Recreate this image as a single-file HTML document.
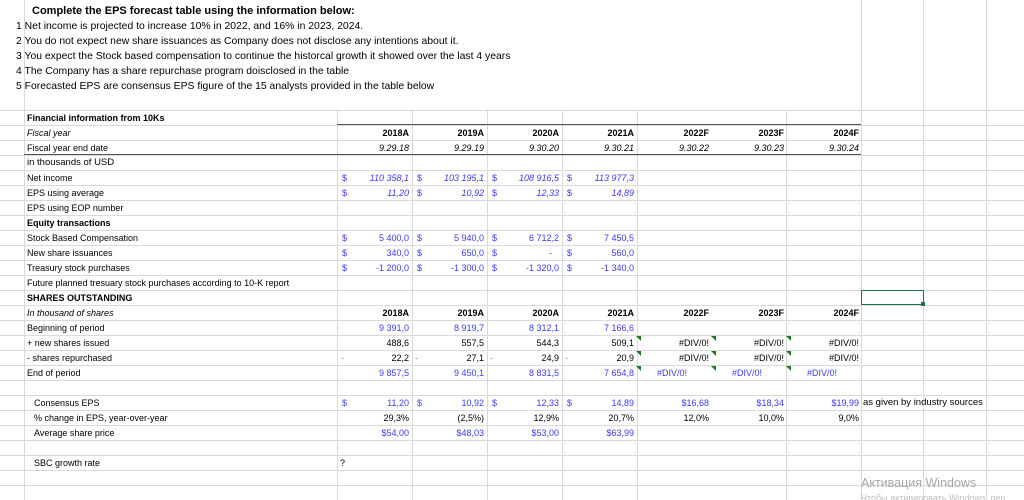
<!DOCTYPE html>
<html style="overflow:hidden;height:500px"><head><meta charset="utf-8"><style>
body{margin:0;width:1024px;height:500px;overflow:hidden;background:#fff;position:relative;font-family:"Liberation Sans",Arial,sans-serif;color:#000}
.g{position:absolute;left:0;top:110px;width:1024px;height:390px;background:repeating-linear-gradient(to bottom,#dadada 0,#dadada 1px,transparent 1px,transparent 15px)}
.v{position:absolute;width:1px;background:#dadada;top:0;height:500px}
.vt{top:110px;height:390px}
.c{position:absolute;height:15px;line-height:16px;white-space:nowrap;font-size:9px}
.r{text-align:right;width:72px}
.b{color:#3b3bf5}
.i{font-style:italic}
.bo{font-weight:bold}
.t{position:absolute;white-space:nowrap;font-size:10.4px;left:16px}
.tri{position:absolute;width:0;height:0;border-top:5px solid #1e7a1e;border-left:5px solid transparent}
</style></head><body>
<div class="g"></div>
<div class="v" style="left:24px"></div>
<div class="v vt" style="left:337px"></div>
<div class="v vt" style="left:412px"></div>
<div class="v vt" style="left:487px"></div>
<div class="v vt" style="left:562px"></div>
<div class="v vt" style="left:637px"></div>
<div class="v vt" style="left:786px"></div>
<div class="v" style="left:861px"></div>
<div class="v" style="left:923px"></div>
<div class="v" style="left:986px"></div>
<div class="v" style="left:315px;height:110px"></div>
<div class="v" style="left:385px;height:110px"></div>
<div style="position:absolute;left:25px;top:0;width:495px;height:110px;background:#fff"></div>
<div class="t bo" style="left:32px;top:5px;font-size:11px">Complete the EPS forecast table using the information below:</div>
<div class="t" style="top:21px">1 Net income is projected to increase 10% in 2022, and 16% in 2023, 2024.</div>
<div class="t" style="top:36px">2 You do not expect new share issuances as Company does not disclose any intentions about it.</div>
<div class="t" style="top:51px">3 You expect the Stock based compensation to continue the historcal growth it showed over the last 4 years</div>
<div class="t" style="top:66px">4 The Company has a share repurchase program doisclosed in the table</div>
<div class="t" style="top:81px">5 Forecasted EPS are consensus EPS figure of the 15 analysts provided in the table below</div>

<div style="position:absolute;left:337px;top:124px;width:524px;height:1px;background:#555"></div>
<div style="position:absolute;left:24px;top:154px;width:837px;height:1px;background:#555"></div>
<div style="position:absolute;left:861px;top:290px;width:61px;height:13px;border:1px solid #217346"></div>
<div style="position:absolute;left:921px;top:302px;width:4px;height:4px;background:#217346"></div>

<div class="c bo" style="left:27px;top:110px">Financial information from 10Ks</div>
<div class="c i" style="left:27px;top:125px">Fiscal year</div>
<div class="c" style="left:27px;top:140px">Fiscal year end date</div>
<div class="c" style="left:27px;top:155px;font-size:9.5px">in thousands of USD</div>
<div class="c" style="left:27px;top:170px">Net income</div>
<div class="c" style="left:27px;top:185px">EPS  using average</div>
<div class="c" style="left:27px;top:200px">EPS  using EOP number</div>
<div class="c bo" style="left:27px;top:215px">Equity transactions</div>
<div class="c" style="left:27px;top:230px">Stock Based Compensation</div>
<div class="c" style="left:27px;top:245px">New share issuances</div>
<div class="c" style="left:27px;top:260px">Treasury stock purchases</div>
<div class="c" style="left:27px;top:275px">Future planned tresuary stock purchases according to 10-K report</div>
<div class="c bo" style="left:27px;top:290px">SHARES OUTSTANDING</div>
<div class="c i" style="left:27px;top:305px">In thousand of shares</div>
<div class="c" style="left:27px;top:320px">Beginning of period</div>
<div class="c" style="left:27px;top:335px">+ new shares issued</div>
<div class="c" style="left:27px;top:350px">- shares repurchased</div>
<div class="c" style="left:27px;top:365px">End of period</div>
<div class="c" style="left:34px;top:395px">Consensus EPS</div>
<div class="c" style="left:34px;top:410px">% change in EPS, year-over-year</div>
<div class="c" style="left:34px;top:425px">Average share price</div>
<div class="c" style="left:34px;top:455px">SBC growth rate</div>
<div class="c" style="left:340px;top:455px">?</div>

<div class="c r bo" style="left:337px;top:125px">2018A</div>
<div class="c r bo" style="left:412px;top:125px">2019A</div>
<div class="c r bo" style="left:487px;top:125px">2020A</div>
<div class="c r bo" style="left:562px;top:125px">2021A</div>
<div class="c r bo" style="left:637px;top:125px">2022F</div>
<div class="c r bo" style="left:712px;top:125px">2023F</div>
<div class="c r bo" style="left:787px;top:125px">2024F</div>
<div class="c r i" style="left:337px;top:140px">9.29.18</div>
<div class="c r i" style="left:412px;top:140px">9.29.19</div>
<div class="c r i" style="left:487px;top:140px">9.30.20</div>
<div class="c r i" style="left:562px;top:140px">9.30.21</div>
<div class="c r i" style="left:637px;top:140px">9.30.22</div>
<div class="c r i" style="left:712px;top:140px">9.30.23</div>
<div class="c r i" style="left:787px;top:140px">9.30.24</div>

<div class="c b" style="left:342px;top:170px">$</div><div class="c b" style="left:417px;top:170px">$</div><div class="c b" style="left:492px;top:170px">$</div><div class="c b" style="left:567px;top:170px">$</div>
<div class="c b" style="left:342px;top:185px">$</div><div class="c b" style="left:417px;top:185px">$</div><div class="c b" style="left:492px;top:185px">$</div><div class="c b" style="left:567px;top:185px">$</div>
<div class="c b" style="left:342px;top:230px">$</div><div class="c b" style="left:417px;top:230px">$</div><div class="c b" style="left:492px;top:230px">$</div><div class="c b" style="left:567px;top:230px">$</div>
<div class="c b" style="left:342px;top:245px">$</div><div class="c b" style="left:417px;top:245px">$</div><div class="c b" style="left:492px;top:245px">$</div><div class="c b" style="left:567px;top:245px">$</div>
<div class="c b" style="left:342px;top:260px">$</div><div class="c b" style="left:417px;top:260px">$</div><div class="c b" style="left:492px;top:260px">$</div><div class="c b" style="left:567px;top:260px">$</div>
<div class="c b" style="left:342px;top:395px">$</div><div class="c b" style="left:417px;top:395px">$</div><div class="c b" style="left:492px;top:395px">$</div><div class="c b" style="left:567px;top:395px">$</div>

<div class="c r b i" style="left:337px;top:170px">110 358,1</div>
<div class="c r b i" style="left:412px;top:170px">103 195,1</div>
<div class="c r b i" style="left:487px;top:170px">108 916,5</div>
<div class="c r b i" style="left:562px;top:170px">113 977,3</div>
<div class="c r b i" style="left:337px;top:185px">11,20</div>
<div class="c r b i" style="left:412px;top:185px">10,92</div>
<div class="c r b i" style="left:487px;top:185px">12,33</div>
<div class="c r b i" style="left:562px;top:185px">14,89</div>

<div class="c r b" style="left:337px;top:230px">5 400,0</div>
<div class="c r b" style="left:412px;top:230px">5 940,0</div>
<div class="c r b" style="left:487px;top:230px">6 712,2</div>
<div class="c r b" style="left:562px;top:230px">7 450,5</div>
<div class="c r b" style="left:337px;top:245px">340,0</div>
<div class="c r b" style="left:412px;top:245px">650,0</div>
<div class="c r b" style="left:480px;top:245px">-</div>
<div class="c r b" style="left:562px;top:245px">560,0</div>
<div class="c r b" style="left:337px;top:260px">-1 200,0</div>
<div class="c r b" style="left:412px;top:260px">-1 300,0</div>
<div class="c r b" style="left:487px;top:260px">-1 320,0</div>
<div class="c r b" style="left:562px;top:260px">-1 340,0</div>

<div class="c r bo" style="left:337px;top:305px">2018A</div>
<div class="c r bo" style="left:412px;top:305px">2019A</div>
<div class="c r bo" style="left:487px;top:305px">2020A</div>
<div class="c r bo" style="left:562px;top:305px">2021A</div>
<div class="c r bo" style="left:637px;top:305px">2022F</div>
<div class="c r bo" style="left:712px;top:305px">2023F</div>
<div class="c r bo" style="left:787px;top:305px">2024F</div>

<div class="c r b" style="left:337px;top:320px">9 391,0</div>
<div class="c r b" style="left:412px;top:320px">8 919,7</div>
<div class="c r b" style="left:487px;top:320px">8 312,1</div>
<div class="c r b" style="left:562px;top:320px">7 166,6</div>
<div class="c r" style="left:337px;top:335px">488,6</div>
<div class="c r" style="left:412px;top:335px">557,5</div>
<div class="c r" style="left:487px;top:335px">544,3</div>
<div class="c r" style="left:562px;top:335px">509,1</div>
<div class="c r" style="left:637px;top:335px">#DIV/0!</div>
<div class="c r" style="left:712px;top:335px">#DIV/0!</div>
<div class="c r" style="left:787px;top:335px">#DIV/0!</div>
<div class="c" style="left:341px;top:350px;color:#888">-</div>
<div class="c" style="left:415px;top:350px;color:#888">-</div>
<div class="c" style="left:490px;top:350px;color:#888">-</div>
<div class="c" style="left:565px;top:350px;color:#888">-</div>
<div class="c r" style="left:337px;top:350px">22,2</div>
<div class="c r" style="left:412px;top:350px">27,1</div>
<div class="c r" style="left:487px;top:350px">24,9</div>
<div class="c r" style="left:562px;top:350px">20,9</div>
<div class="c r" style="left:637px;top:350px">#DIV/0!</div>
<div class="c r" style="left:712px;top:350px">#DIV/0!</div>
<div class="c r" style="left:787px;top:350px">#DIV/0!</div>
<div class="c r b" style="left:337px;top:365px">9 857,5</div>
<div class="c r b" style="left:412px;top:365px">9 450,1</div>
<div class="c r b" style="left:487px;top:365px">8 831,5</div>
<div class="c r b" style="left:562px;top:365px">7 654,8</div>
<div class="c b" style="left:657px;top:365px">#DIV/0!</div>
<div class="c b" style="left:732px;top:365px">#DIV/0!</div>
<div class="c b" style="left:807px;top:365px">#DIV/0!</div>

<div class="tri" style="left:636px;top:336px"></div><div class="tri" style="left:711px;top:336px"></div><div class="tri" style="left:786px;top:336px"></div>
<div class="tri" style="left:636px;top:351px"></div><div class="tri" style="left:711px;top:351px"></div><div class="tri" style="left:786px;top:351px"></div>
<div class="tri" style="left:636px;top:366px"></div><div class="tri" style="left:711px;top:366px"></div><div class="tri" style="left:786px;top:366px"></div>

<div class="c r b" style="left:337px;top:395px">11,20</div>
<div class="c r b" style="left:412px;top:395px">10,92</div>
<div class="c r b" style="left:487px;top:395px">12,33</div>
<div class="c r b" style="left:562px;top:395px">14,89</div>
<div class="c r b" style="left:637px;top:395px">$16,68</div>
<div class="c r b" style="left:712px;top:395px">$18,34</div>
<div class="c r b" style="left:787px;top:395px">$19,99</div>
<div class="c" style="left:863px;top:395px;font-size:9.5px">as given by industry sources</div>
<div class="c r" style="left:337px;top:410px">29,3%</div>
<div class="c r" style="left:412px;top:410px">(2,5%)</div>
<div class="c r" style="left:487px;top:410px">12,9%</div>
<div class="c r" style="left:562px;top:410px">20,7%</div>
<div class="c r" style="left:637px;top:410px">12,0%</div>
<div class="c r" style="left:712px;top:410px">10,0%</div>
<div class="c r" style="left:787px;top:410px">9,0%</div>
<div class="c r b" style="left:337px;top:425px">$54,00</div>
<div class="c r b" style="left:412px;top:425px">$48,03</div>
<div class="c r b" style="left:487px;top:425px">$53,00</div>
<div class="c r b" style="left:562px;top:425px">$63,99</div>

<div style="position:absolute;left:861px;top:476px;font-size:12.5px;color:#a8a8a8;white-space:nowrap">Активация Windows</div>
<div style="position:absolute;left:861px;top:493px;font-size:9px;color:#c0c0c0;white-space:nowrap">Чтобы активировать Windows, пер</div>
</body></html>
